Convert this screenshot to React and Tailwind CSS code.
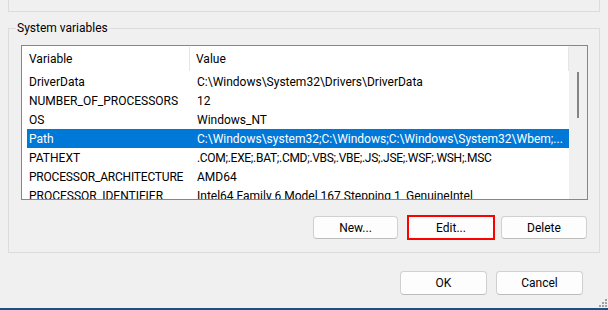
import React from "react";

const rows = [
  { name: "DriverData", value: "C:\\Windows\\System32\\Drivers\\DriverData" },
  { name: "NUMBER_OF_PROCESSORS", value: "12" },
  { name: "OS", value: "Windows_NT" },
  { name: "Path", value: "C:\\Windows\\system32;C:\\Windows;C:\\Windows\\System32\\Wbem;...", selected: true },
  {
    name: "PATHEXT",
    value: ".COM;.EXE;.BAT;.CMD;.VBS;.VBE;.JS;.JSE;.WSF;.WSH;.MSC",
    valueClass: "tracking-[-0.3px]",
  },
  { name: "PROCESSOR_ARCHITECTURE", nameClass: "tracking-[-0.2px]", value: "AMD64" },
  { name: "PROCESSOR_IDENTIFIER", value: "Intel64 Family 6 Model 167 Stepping 1, GenuineIntel" },
];

const Button = ({ children, className = "" }) => (
  <button
    type="button"
    className={`flex items-center justify-center rounded-[4px] border border-[#d0d0d0] border-b-[#bdbdbd] bg-[#fdfdfd] text-[12px] text-black ${className}`}
  >
    {children}
  </button>
);

// Size grip in the window corner
const Grip = () => (
  <svg width="9" height="9" viewBox="0 0 9 9" className="absolute right-[1px] bottom-[3px]">
    {[
      [7, 1], [7, 4], [4, 4], [7, 7], [4, 7], [1, 7],
    ].map(([x, y]) => (
      <rect key={`${x}-${y}`} x={x} y={y} width="2" height="2" fill="#a0a0a0" />
    ))}
  </svg>
);

export default function App() {
  return (
    <div className="relative w-[608px] h-[310px] bg-[#f0f0f0] flex flex-col overflow-hidden font-['Roboto','Liberation_Sans',sans-serif] text-[12px] text-black">
      {/* bottom of the User variables group */}
      <div className="mx-2 h-[12px] border-x border-b border-[#dcdcdc]" />

      {/* System variables group */}
      <div className="relative mx-2 mt-[16px] h-[225px] border border-[#dcdcdc] pt-[16px] pl-[12px] pr-[11px]">
        <span className="absolute left-[7px] top-[-9px] bg-[#f0f0f0] px-[1px] leading-[16px]">
          System variables
        </span>

        {/* list view */}
        <div className="flex w-[567px] h-[155px] border border-[#828790] bg-white overflow-hidden">
          <div className="flex flex-col w-[547px]">
            <div className="flex h-[26px] shrink-0">
              <div className="w-[168px] flex items-center pl-[7px] border-r border-[#e5e5e5] my-[1px]">Variable</div>
              <div className="flex-1 flex items-center pl-[6px] border-r border-[#e5e5e5] my-[1px]">Value</div>
            </div>
            {rows.map((r) => (
              <div
                key={r.name}
                className={`flex h-[19px] shrink-0 ml-[5px] items-center whitespace-nowrap ${
                  r.selected ? "bg-[#0078d7] text-white" : ""
                }`}
              >
                <div className={`w-[164px] pl-[2px] overflow-hidden ${r.nameClass || ""}`}>{r.name}</div>
                <div className={`flex-1 pl-[6px] overflow-hidden ${r.valueClass || ""}`}>{r.value}</div>
              </div>
            ))}
          </div>
          {/* scrollbar */}
          <div className="w-[18px] bg-[#f0f0f0] pt-[26px] pl-[8px]">
            <div className="w-[2px] h-[46px] bg-[#858585]" />
          </div>
        </div>

        <div className="flex justify-end items-center mt-[15px]">
          <Button className="w-[85px] h-[23px] mr-[9px]">New...</Button>
          <button
            type="button"
            className="w-[88px] h-[25px] mr-[6px] flex items-center justify-center border-2 border-[#ff0000] bg-[#fdfdfd] text-[12px]"
          >
            Edit...
          </button>
          <Button className="w-[86px] h-[23px] mr-[1px]">Delete</Button>
        </div>
      </div>

      <div className="flex justify-end gap-[9px] mt-[18px] pr-[25px]">
        <Button className="w-[87px] h-[24px] border-[#0067c0] border-b-[#0067c0]">OK</Button>
        <Button className="w-[87px] h-[24px]">Cancel</Button>
      </div>

      <div className="flex-1" />
      <div className="h-[2px] bg-[#1f4f86]" />
      <Grip />
    </div>
  );
}
